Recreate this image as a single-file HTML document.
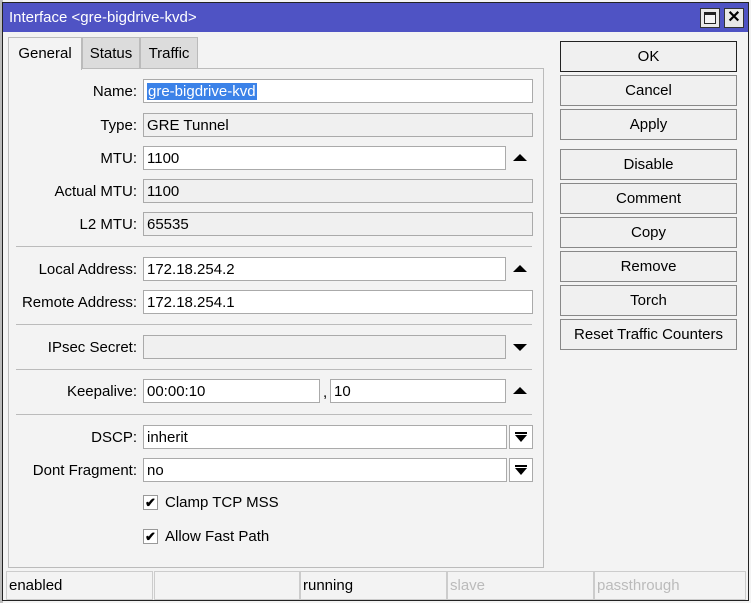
<!DOCTYPE html>
<html><head><style>
*{box-sizing:border-box;margin:0;padding:0}
body{width:751px;height:603px;background:#f3f3f3;position:relative;overflow:hidden;font-family:"Liberation Sans",sans-serif;font-size:15px;color:#000}
.a{position:absolute}
.win{left:2px;top:2px;width:747px;height:599px;border:1px solid #222;background:#f3f3f3}
.title{left:3px;top:3px;width:745px;height:29px;background:#4f53c4;color:#fff;font-size:15px;line-height:29px;padding-left:6px}
.tb{top:8px;width:20px;height:20px;background:#e8e8e8;border:1px solid #333}
.tab{top:37px;height:32px;border:1px solid #bbb;background:#dcdcdc;line-height:32px;text-align:center}
.panel{left:8px;top:68px;width:536px;height:500px;border:1px solid #bbb;background:#f3f3f3}
.lbl{width:131px;left:6px;text-align:right;height:24px;line-height:25px}
.in{height:24px;border:1px solid #aaa;background:#fff;line-height:23px;padding-left:3px}
.ro{background:#f0f0f0}
.sep{left:16px;width:516px;height:1px;background:#bbb}
.up{width:0;height:0;border-left:7px solid transparent;border-right:7px solid transparent;border-bottom:7px solid #000}
.dn{width:0;height:0;border-left:7px solid transparent;border-right:7px solid transparent;border-top:7px solid #000}
.dd{width:24px;height:24px;border:1px solid #aaa;background:#fff}
.btn{left:560px;width:177px;height:31px;border:1px solid #888;background:#f0f0f0;text-align:center;line-height:30px;font-size:15px}
.cb{width:15px;height:15px;border:1px solid #999;background:#fff;font-size:13px;line-height:13px;text-align:center;font-weight:bold}
.st{top:571px;height:29px;border:1px solid #ccc;line-height:28px;padding-left:2px;font-size:15px}
</style></head><body>
<div class="a" style="left:0;top:0;width:3px;height:603px;background:#bbb"></div>
<div class="a win"></div>
<div class="a title">Interface &lt;gre-bigdrive-kvd&gt;</div>
<div class="a tb" style="left:700px"><div style="margin:3px;height:12px;border:1px solid #222;border-top-width:3px;background:#f3f3f3"></div></div>
<div class="a tb" style="left:724px;text-align:center;line-height:18px;font-weight:bold;font-size:16px">✕</div>
<div class="a panel"></div>
<div class="a tab" style="left:8px;width:74px;background:#f3f3f3;border-bottom:none;height:33px;font-size:15px">General</div>
<div class="a tab" style="left:82px;width:58px;font-size:15px">Status</div>
<div class="a tab" style="left:140px;width:58px;font-size:15px">Traffic</div>

<div class="a lbl" style="top:79px">Name:</div>
<div class="a in" style="left:143px;top:79px;width:390px"><span style="background:#3b82e8;color:#fff;padding:0 1px">gre-bigdrive-kvd</span></div>
<div class="a lbl" style="top:113px">Type:</div>
<div class="a in ro" style="left:143px;top:113px;width:390px">GRE Tunnel</div>
<div class="a lbl" style="top:146px">MTU:</div>
<div class="a in" style="left:143px;top:146px;width:363px">1100</div>
<div class="a up" style="left:513px;top:154px"></div>
<div class="a lbl" style="top:179px">Actual MTU:</div>
<div class="a in ro" style="left:143px;top:179px;width:390px">1100</div>
<div class="a lbl" style="top:212px">L2 MTU:</div>
<div class="a in ro" style="left:143px;top:212px;width:390px">65535</div>
<div class="a sep" style="top:246px"></div>
<div class="a lbl" style="top:257px">Local Address:</div>
<div class="a in" style="left:143px;top:257px;width:363px">172.18.254.2</div>
<div class="a up" style="left:513px;top:265px"></div>
<div class="a lbl" style="top:290px">Remote Address:</div>
<div class="a in" style="left:143px;top:290px;width:390px">172.18.254.1</div>
<div class="a sep" style="top:324px"></div>
<div class="a lbl" style="top:335px">IPsec Secret:</div>
<div class="a in ro" style="left:143px;top:335px;width:363px"></div>
<div class="a dn" style="left:513px;top:344px"></div>
<div class="a sep" style="top:369px"></div>
<div class="a lbl" style="top:379px">Keepalive:</div>
<div class="a in" style="left:143px;top:379px;width:177px">00:00:10</div>
<div class="a" style="left:323px;top:379px;line-height:28px">,</div>
<div class="a in" style="left:330px;top:379px;width:176px">10</div>
<div class="a up" style="left:513px;top:387px"></div>
<div class="a sep" style="top:414px"></div>
<div class="a lbl" style="top:425px">DSCP:</div>
<div class="a in" style="left:143px;top:425px;width:364px">inherit</div>
<div class="a dd" style="left:509px;top:425px"><div style="margin:6px 0 0 5px;width:12px;height:2px;background:#000"></div><div class="dn" style="margin:1px 0 0 5px;border-left-width:6px;border-right-width:6px;border-top-width:7px"></div></div>
<div class="a lbl" style="top:458px">Dont Fragment:</div>
<div class="a in" style="left:143px;top:458px;width:364px">no</div>
<div class="a dd" style="left:509px;top:458px"><div style="margin:6px 0 0 5px;width:12px;height:2px;background:#000"></div><div class="dn" style="margin:1px 0 0 5px;border-left-width:6px;border-right-width:6px;border-top-width:7px"></div></div>
<div class="a cb" style="left:143px;top:495px">✔</div>
<div class="a" style="left:165px;top:494px;font-size:15px">Clamp TCP MSS</div>
<div class="a cb" style="left:143px;top:529px">✔</div>
<div class="a" style="left:165px;top:528px;font-size:15px">Allow Fast Path</div>

<div class="a btn" style="top:41px;border-color:#222">OK</div>
<div class="a btn" style="top:75px">Cancel</div>
<div class="a btn" style="top:109px">Apply</div>
<div class="a btn" style="top:149px">Disable</div>
<div class="a btn" style="top:183px">Comment</div>
<div class="a btn" style="top:217px">Copy</div>
<div class="a btn" style="top:251px">Remove</div>
<div class="a btn" style="top:285px">Torch</div>
<div class="a btn" style="top:319px">Reset Traffic Counters</div>

<div class="a st" style="left:6px;width:147px">enabled</div>
<div class="a st" style="left:154px;width:146px"></div>
<div class="a st" style="left:300px;width:147px">running</div>
<div class="a st" style="left:447px;width:147px;color:#bbb">slave</div>
<div class="a st" style="left:594px;width:152px;color:#bbb">passthrough</div>
</body></html>
